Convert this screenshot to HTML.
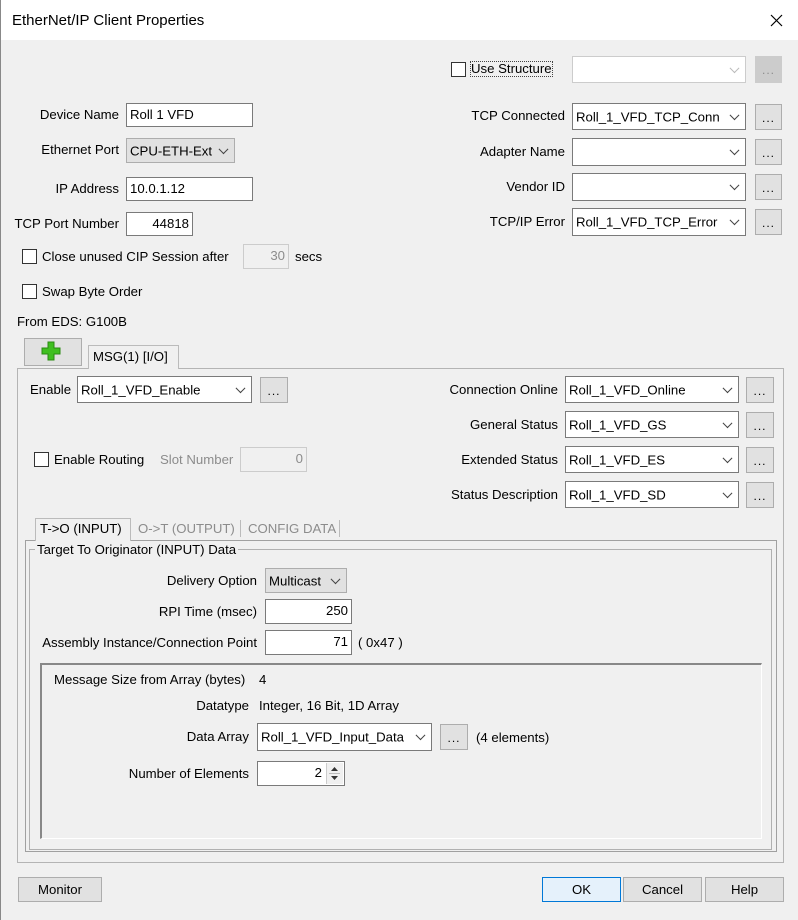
<!DOCTYPE html>
<html><head><meta charset="utf-8"><style>
*{box-sizing:border-box;margin:0;padding:0}
body{width:798px;height:920px;background:#f0f0f0;font-family:"Liberation Sans",sans-serif;font-size:13.2px;color:#000;position:relative;overflow:hidden}
.a{position:absolute}
.t{position:absolute;white-space:nowrap;line-height:14px}
.r{text-align:right}
.in{position:absolute;background:#fff;border:1px solid #7a7a7a;padding:0 3px;line-height:22px;white-space:nowrap;overflow:hidden}
.cb{position:absolute;background:#fff;border:1px solid #7a7a7a;padding:0 3px;white-space:nowrap;overflow:hidden}
.cb span{position:absolute;left:3px;top:50%;transform:translateY(-50%)}
.cb i{position:absolute;right:7px;top:50%;width:7px;height:7px;border-right:1.3px solid #444;border-bottom:1.3px solid #444;transform:translateY(-75%) rotate(45deg)}
.gc{background:#e1e1e1;border-color:#adadad}
.dis{border-color:#ccc}
.dis i{border-color:#bbb}
.btn{position:absolute;background:#e1e1e1;border:1px solid #adadad;text-align:center;white-space:nowrap}
.dots{font-size:12px;line-height:26px;letter-spacing:1px}
.ck{position:absolute;width:15px;height:15px;border:1px solid #333;background:#fff}
.box{position:absolute;border:1px solid #a0a0a0}
.g{color:#8c8c8c}
</style></head><body>
<div class="a" style="left:0;top:0;width:798px;height:40px;background:#fff"></div>
<div class="a" style="left:0;top:0;width:1px;height:920px;background:#888"></div>
<div class="t" style="left:12px;top:12px;font-size:15px;line-height:18px">EtherNet/IP Client Properties</div>
<svg class="a" style="left:770px;top:14px" width="13" height="13"><path d="M1 1L12 12M12 1L1 12" stroke="#000" stroke-width="1.2"/></svg>

<div class="ck" style="left:451px;top:62px"></div>
<div class="t" style="left:471px;top:62px;outline:1px dotted #444">Use Structure</div>
<div class="cb dis" style="left:572px;top:56px;width:174px;height:27px"><i></i></div>
<div class="btn dots g" style="left:755px;top:56px;width:27px;height:27px;background:#ccc;border-color:#ccc">...</div>

<div class="t r" style="left:0;width:119px;top:108px">Device Name</div>
<div class="in" style="left:126px;top:103px;width:127px;height:24px">Roll 1 VFD</div>
<div class="t r" style="left:0;width:119px;top:143px">Ethernet Port</div>
<div class="cb gc" style="left:126px;top:138px;width:109px;height:25px"><span>CPU-ETH-Ext</span><i></i></div>
<div class="t r" style="left:0;width:119px;top:182px">IP Address</div>
<div class="in" style="left:126px;top:177px;width:127px;height:24px">10.0.1.12</div>
<div class="t r" style="left:0;width:119px;top:217px">TCP Port Number</div>
<div class="in r" style="left:126px;top:212px;width:67px;height:24px">44818</div>
<div class="ck" style="left:22px;top:249px"></div>
<div class="t" style="left:42px;top:250px">Close unused CIP Session after</div>
<div class="in r g" style="left:243px;top:244px;width:46px;height:25px;border-color:#ccc;background:#f0f0f0">30</div>
<div class="t" style="left:295px;top:250px">secs</div>
<div class="ck" style="left:22px;top:284px"></div>
<div class="t" style="left:42px;top:285px">Swap Byte Order</div>
<div class="t" style="left:17px;top:315px">From EDS: G100B</div>

<div class="t r" style="left:400px;width:165px;top:109px">TCP Connected</div>
<div class="cb" style="left:572px;top:103px;width:174px;height:27px"><span>Roll_1_VFD_TCP_Conn</span><i></i></div>
<div class="btn dots" style="left:755px;top:104px;width:27px;height:26px">...</div>
<div class="t r" style="left:400px;width:165px;top:145px">Adapter Name</div>
<div class="cb" style="left:572px;top:138px;width:174px;height:28px"><i></i></div>
<div class="btn dots" style="left:755px;top:139px;width:27px;height:26px">...</div>
<div class="t r" style="left:400px;width:165px;top:180px">Vendor ID</div>
<div class="cb" style="left:572px;top:173px;width:174px;height:28px"><i></i></div>
<div class="btn dots" style="left:755px;top:174px;width:27px;height:26px">...</div>
<div class="t r" style="left:400px;width:165px;top:215px">TCP/IP Error</div>
<div class="cb" style="left:572px;top:208px;width:174px;height:28px"><span>Roll_1_VFD_TCP_Error</span><i></i></div>
<div class="btn dots" style="left:755px;top:209px;width:27px;height:26px">...</div>

<div class="btn" style="left:24px;top:338px;width:58px;height:28px"></div>
<svg class="a" style="left:41px;top:341px" width="20" height="20"><path d="M7 1h6v6h6v6h-6v6H7v-6H1V7h6z" fill="#3fbf1f" stroke="#2a8a12" stroke-width="1"/></svg>
<div class="a" style="left:88px;top:345px;width:91px;height:24px;border:1px solid #bbb;border-bottom:none;background:#f0f0f0;z-index:2"></div>
<div class="t" style="left:93px;top:350px;z-index:3">MSG(1) [I/O]</div>
<div class="box" style="left:17px;top:368px;width:767px;height:495px;border-color:#b4b4b4"></div>

<div class="t" style="left:30px;top:383px">Enable</div>
<div class="cb" style="left:77px;top:376px;width:175px;height:27px"><span>Roll_1_VFD_Enable</span><i></i></div>
<div class="btn dots" style="left:260px;top:377px;width:28px;height:26px">...</div>
<div class="ck" style="left:34px;top:452px"></div>
<div class="t" style="left:54px;top:453px">Enable Routing</div>
<div class="t g" style="left:160px;top:453px">Slot Number</div>
<div class="in r g" style="left:240px;top:447px;width:67px;height:25px;border-color:#ccc;background:#f0f0f0">0</div>

<div class="t r" style="left:400px;width:158px;top:383px">Connection Online</div>
<div class="cb" style="left:565px;top:376px;width:174px;height:27px"><span>Roll_1_VFD_Online</span><i></i></div>
<div class="btn dots" style="left:746px;top:377px;width:28px;height:26px">...</div>
<div class="t r" style="left:400px;width:158px;top:418px">General Status</div>
<div class="cb" style="left:565px;top:411px;width:174px;height:27px"><span>Roll_1_VFD_GS</span><i></i></div>
<div class="btn dots" style="left:746px;top:412px;width:28px;height:26px">...</div>
<div class="t r" style="left:400px;width:158px;top:453px">Extended Status</div>
<div class="cb" style="left:565px;top:446px;width:174px;height:27px"><span>Roll_1_VFD_ES</span><i></i></div>
<div class="btn dots" style="left:746px;top:447px;width:28px;height:26px">...</div>
<div class="t r" style="left:400px;width:158px;top:488px">Status Description</div>
<div class="cb" style="left:565px;top:481px;width:174px;height:27px"><span>Roll_1_VFD_SD</span><i></i></div>
<div class="btn dots" style="left:746px;top:482px;width:28px;height:26px">...</div>

<div class="box" style="left:25px;top:540px;width:752px;height:312px"></div>
<div class="a" style="left:35px;top:518px;width:96px;height:23px;border:1px solid #bbb;border-bottom:none;background:#f0f0f0"></div>
<div class="t" style="left:40px;top:522px">T-&gt;O (INPUT)</div>
<div class="t g" style="left:138px;top:522px">O-&gt;T (OUTPUT)</div>
<div class="a" style="left:240px;top:520px;width:1px;height:17px;background:#bbb"></div>
<div class="t g" style="left:248px;top:522px">CONFIG DATA</div>
<div class="a" style="left:339px;top:520px;width:1px;height:17px;background:#bbb"></div>

<div class="box" style="left:29px;top:549px;width:743px;height:301px;border-color:#b0b0b0"></div>
<div class="t" style="left:35px;top:543px;background:#f0f0f0;padding:0 2px">Target To Originator (INPUT) Data</div>

<div class="t r" style="left:40px;width:217px;top:574px">Delivery Option</div>
<div class="cb gc" style="left:265px;top:568px;width:82px;height:25px"><span>Multicast</span><i></i></div>
<div class="t r" style="left:40px;width:217px;top:605px">RPI Time (msec)</div>
<div class="in r" style="left:265px;top:599px;width:87px;height:25px">250</div>
<div class="t r" style="left:30px;width:227px;top:636px">Assembly Instance/Connection Point</div>
<div class="in r" style="left:265px;top:630px;width:87px;height:25px">71</div>
<div class="t" style="left:358px;top:636px">( 0x47 )</div>

<div class="a" style="left:40px;top:663px;width:722px;height:176px;border-top:2px solid #888;border-left:2px solid #888;border-right:1px solid #fff;border-bottom:1px solid #fff"></div>
<div class="t" style="left:54px;top:673px">Message Size from Array (bytes)</div>
<div class="t" style="left:259px;top:673px">4</div>
<div class="t r" style="left:40px;width:209px;top:699px">Datatype</div>
<div class="t" style="left:259px;top:699px">Integer, 16 Bit, 1D Array</div>
<div class="t r" style="left:40px;width:209px;top:730px">Data Array</div>
<div class="cb" style="left:257px;top:723px;width:175px;height:28px"><span>Roll_1_VFD_Input_Data</span><i></i></div>
<div class="btn dots" style="left:440px;top:724px;width:28px;height:26px">...</div>
<div class="t" style="left:476px;top:731px">(4 elements)</div>
<div class="t r" style="left:40px;width:209px;top:767px">Number of Elements</div>
<div class="in r" style="left:257px;top:761px;width:88px;height:25px;padding-right:22px">2</div>
<div class="a" style="left:326px;top:763px;width:17px;height:21px;background:#f0f0f0;border-left:1px solid #ccc"></div>
<svg class="a" style="left:329px;top:764px" width="11" height="19"><path d="M2 7L5.5 3L9 7z M2 12L5.5 16L9 12z" fill="#333"/><path d="M0 9.5H11" stroke="#bbb"/></svg>

<div class="btn" style="left:18px;top:877px;width:84px;height:25px;line-height:23px">Monitor</div>
<div class="btn" style="left:542px;top:877px;width:79px;height:25px;line-height:23px;border:1px solid #0078d7;background:#e5f1fb">OK</div>
<div class="btn" style="left:623px;top:877px;width:79px;height:25px;line-height:23px">Cancel</div>
<div class="btn" style="left:705px;top:877px;width:79px;height:25px;line-height:23px">Help</div>
</body></html>
